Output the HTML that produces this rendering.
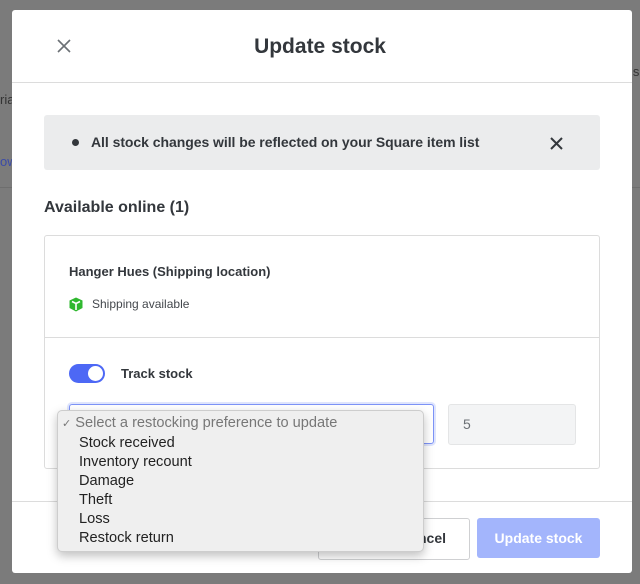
<!DOCTYPE html>
<html><head><style>
body{margin:0;width:640px;height:584px;overflow:hidden;background:#7b7b7b;font-family:"Liberation Sans",sans-serif;position:relative;color:#373b40}
.a{position:absolute}
</style></head><body>
<div class="a" style="left:0;top:187px;width:640px;height:1px;background:#6e6e6e"></div>
<div class="a" style="left:0;top:92px;font-size:13px;color:#333">ria</div>
<div class="a" style="left:0;top:154px;font-size:13px;color:#3a4aa8">ow</div>
<div class="a" style="left:630px;top:64px;font-size:13px;color:#333">ls</div>
<div class="a" style="left:12px;top:10px;width:620px;height:563px;background:#fff;border-radius:3px"></div>
<svg class="a" style="left:57px;top:39px" width="14" height="14"><path d="M1 1L13 13M13 1L1 13" stroke="#6b7075" stroke-width="1.6"/></svg>
<div class="a" style="left:0;width:640px;top:35px;text-align:center;font-size:21px;font-weight:bold;color:#33373c">Update stock</div>
<div class="a" style="left:12px;top:82px;width:620px;height:1px;background:#dcdcdc"></div>
<div class="a" style="left:44px;top:115px;width:556px;height:55px;background:#ebeced;border-radius:3px"></div>
<div class="a" style="left:72px;top:139px;width:7px;height:7px;border-radius:50%;background:#33373c"></div>
<div class="a" style="left:91px;top:134px;font-size:14px;font-weight:bold;color:#33373c;letter-spacing:-0.05px">All stock changes will be reflected on your Square item list</div>
<svg class="a" style="left:550px;top:137px" width="13" height="13"><path d="M1 1L12 12M12 1L1 12" stroke="#33373c" stroke-width="2"/></svg>
<div class="a" style="left:44px;top:199px;font-size:16px;font-weight:bold;color:#33373c">Available online (1)</div>
<div class="a" style="left:44px;top:235px;width:554px;height:232px;border:1px solid #dcdcdc;border-radius:3px"></div>
<div class="a" style="left:45px;top:337px;width:554px;height:1px;background:#dcdcdc"></div>
<div class="a" style="left:69px;top:264px;font-size:13px;font-weight:bold;color:#33373c">Hanger Hues (Shipping location)</div>
<svg class="a" style="left:69px;top:297px" width="14" height="15" viewBox="0 0 14 15"><path d="M7 0.5L13.5 3.5V11L7 14.5L0.5 11V3.5Z" fill="#2fb82f"/><path d="M3 4.5L7 6.5L11 4.5M7 6.5V13" stroke="#fff" stroke-width="1.6" fill="none"/></svg>
<div class="a" style="left:92px;top:297px;font-size:12px;color:#44484d">Shipping available</div>
<div class="a" style="left:69px;top:364px;width:36px;height:19px;border-radius:10px;background:#4d68f5"></div>
<div class="a" style="left:88px;top:366px;width:15px;height:15px;border-radius:50%;background:#fff"></div>
<div class="a" style="left:121px;top:366px;font-size:13px;font-weight:bold;color:#33373c">Track stock</div>
<div class="a" style="left:69px;top:404px;width:363px;height:38px;border:1px solid #7d93f7;border-radius:3px;box-shadow:0 0 0 2px #dfe5fd"></div>
<div class="a" style="left:448px;top:404px;width:126px;height:39px;background:#f3f4f5;border:1px solid #e4e5e6;border-radius:3px"></div>
<div class="a" style="left:463px;top:416px;font-size:14px;color:#6b7075">5</div>
<div class="a" style="left:12px;top:501px;width:620px;height:1px;background:#dcdcdc"></div>
<div class="a" style="left:477px;top:518px;width:123px;height:40px;background:#a3b5fc;border-radius:3px;color:#fff;font-size:14px;font-weight:bold;text-align:center;line-height:40px">Update stock</div>
<div class="a" style="left:318px;top:518px;width:150px;height:40px;border:1px solid #cfd0d2;border-radius:3px;background:#fff"></div>
<div class="a" style="left:418px;top:530px;font-size:14px;font-weight:bold;color:#33373c">ncel</div>
<div class="a" style="left:57px;top:410px;width:367px;height:142px;background:#efefef;border:1px solid #cdcdcd;border-radius:5px;box-shadow:0 4px 10px rgba(0,0,0,.25);font-size:14.6px;color:#222;line-height:19px;padding-top:3px;box-sizing:border-box">
<div style="padding-left:4px;color:#777"><span style="font-size:11px">✓</span> <span>Select a restocking preference to update</span></div>
<div style="padding-left:21px">Stock received</div>
<div style="padding-left:21px">Inventory recount</div>
<div style="padding-left:21px">Damage</div>
<div style="padding-left:21px">Theft</div>
<div style="padding-left:21px">Loss</div>
<div style="padding-left:21px">Restock return</div>
</div>
</body></html>
